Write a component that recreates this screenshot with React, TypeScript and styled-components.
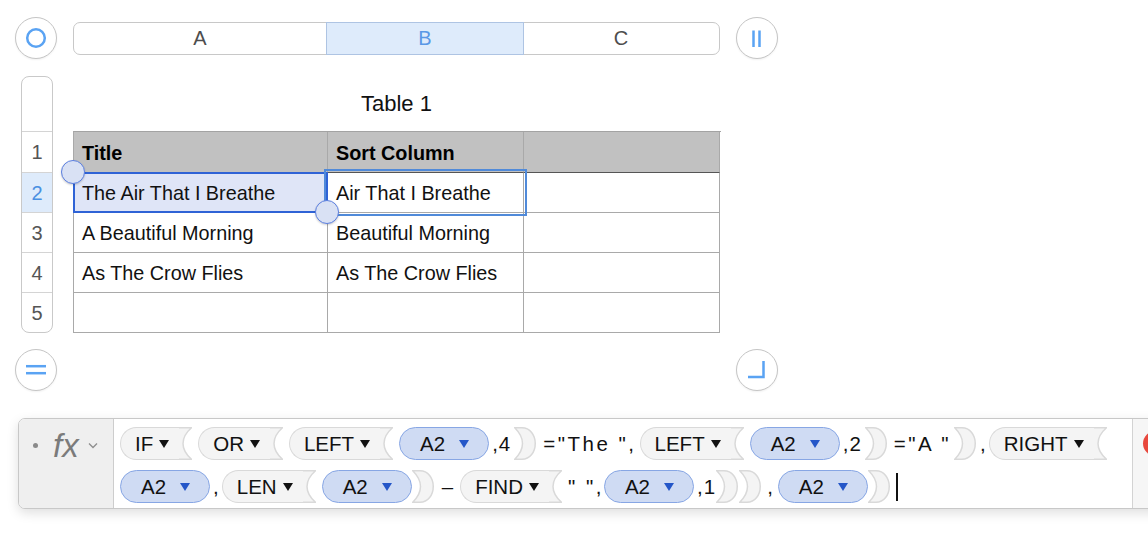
import React from "react";
import styled, { createGlobalStyle } from "styled-components";

const GlobalStyle = createGlobalStyle`
  html, body {
    margin: 0;
    padding: 0;
    overflow: hidden;
    background: #fff;
  }
  body {
    font-family: "Liberation Sans", Arial, sans-serif;
    color: #111;
  }
`;

const BLUE = "#5aa3f3";

const Page = styled.div`
  width: 1148px;
  height: 538px;
  box-sizing: border-box;
  padding: 17px 0 0 15px;
`;

const Sheet = styled.div`
  display: grid;
  grid-template-columns: 42px 647px 42px;
  grid-template-rows: 43px 257px 42px;
  column-gap: 16px;
  row-gap: 16px;
`;

const CircleButton = styled.div<{ $col: number; $row: number }>`
  grid-column: ${(p) => p.$col};
  grid-row: ${(p) => p.$row};
  align-self: start;
  width: 42px;
  height: 42px;
  box-sizing: border-box;
  border-radius: 50%;
  border: 1.5px solid #c5c5c5;
  background: #fff;
  box-shadow: 0 1px 2px rgba(0, 0, 0, 0.06);
  display: flex;
  align-items: center;
  justify-content: center;
`;

const ColumnBar = styled.div`
  grid-column: 2;
  grid-row: 1;
  align-self: center;
  display: grid;
  grid-template-columns: 253px 196px 196px;
  width: 647px;
  height: 33px;
  box-sizing: border-box;
  border: 1px solid #c8c8c8;
  border-radius: 7px;
  background: #fff;
`;

const ColumnLabel = styled.div<{ $active?: boolean; $sep?: boolean }>`
  position: relative;
  display: flex;
  align-items: center;
  justify-content: center;
  font-size: 20px;
  color: ${(p) => (p.$active ? "#5a98e6" : "#4d4d4d")};
  background: ${(p) => (p.$active ? "#deebfb" : "transparent")};
  border-right: ${(p) => (p.$sep ? "1px solid #c8c8c8" : "none")};
  box-shadow: ${(p) => (p.$active ? "0 0 0 1px #aec4e3" : "none")};
`;

const RowHeaders = styled.div`
  grid-column: 1;
  grid-row: 2;
  margin-left: 6px;
  width: 32px;
  box-sizing: border-box;
  border: 1px solid #c9c9c9;
  border-radius: 8px;
  overflow: hidden;
  display: flex;
  flex-direction: column;
  background: #fff;
`;

const RowHeaderTop = styled.div`
  height: 54px;
`;

const RowNumber = styled.div<{ $active?: boolean; $first?: boolean }>`
  height: ${(p) => (p.$first ? 41 : 40)}px;
  box-sizing: border-box;
  border-top: 1px solid #d4d4d4;
  padding-top: 1px;
  display: flex;
  align-items: center;
  justify-content: center;
  font-size: 20px;
  color: ${(p) => (p.$active ? "#4a90e2" : "#555")};
  background: ${(p) => (p.$active ? "#deebfb" : "transparent")};
`;

const TableArea = styled.div`
  grid-column: 2;
  grid-row: 2;
  display: flex;
  flex-direction: column;
`;

const TableTitle = styled.div`
  height: 55px;
  width: 647px;
  display: flex;
  align-items: center;
  justify-content: center;
  font-size: 22px;
  color: #111;
`;

const Table = styled.div`
  display: grid;
  grid-template-columns: 254px 196px 196px;
  width: 647px;
  border-left: 1px solid #a9a9a9;
  border-top: 1px solid #a3a3a3;
`;

const Cell = styled.div`
  height: 40px;
  box-sizing: border-box;
  border-right: 1px solid #a9a9a9;
  border-bottom: 1px solid #a9a9a9;
  padding: 2px 0 0 8px;
  display: flex;
  align-items: center;
  font-size: 19.8px;
  color: #111;
  white-space: nowrap;
`;

const HeaderCell = styled(Cell)`
  height: 41px;
  background: #c1c1c1;
  font-weight: bold;
  color: #000;
  border-bottom-color: #555;
`;

const SelectedCell = styled(Cell)`
  position: relative;
  background: #dfe5f7;
  &::after {
    content: "";
    position: absolute;
    top: -1px;
    left: -1px;
    right: -1px;
    bottom: -1px;
    border: 2px solid #2f63d6;
    pointer-events: none;
  }
`;

const ReferencedCell = styled(Cell)`
  position: relative;
  &::after {
    content: "";
    position: absolute;
    top: -4px;
    left: -4px;
    right: -4px;
    bottom: -4px;
    border: 2px solid #508ad9;
    z-index: 1;
    pointer-events: none;
  }
`;

const Handle = styled.span<{ $corner: "tl" | "br" }>`
  position: absolute;
  width: 24px;
  height: 24px;
  box-sizing: border-box;
  border-radius: 50%;
  background: #d9e1f4;
  border: 1.5px solid #5b7fe0;
  box-shadow: 0 1px 2px rgba(0, 0, 0, 0.18);
  z-index: 3;
  ${(p) => (p.$corner === "tl" ? "left: -13px; top: -13px;" : "right: -12px; bottom: -12px;")}
`;

const FormulaBar = styled.div`
  margin: 27px 0 0 3px;
  width: 1200px;
  height: 91px;
  box-sizing: border-box;
  display: flex;
  border: 1px solid #c8c8c8;
  border-radius: 7px;
  background: #fff;
  box-shadow: 0 4px 12px rgba(0, 0, 0, 0.13);
  overflow: hidden;
`;

const FxSection = styled.div`
  width: 95px;
  flex-shrink: 0;
  box-sizing: border-box;
  background: #efefef;
  border-right: 1px solid #cdcdcd;
`;

const FxRow = styled.div`
  display: flex;
  align-items: center;
  height: 52px;
  padding-left: 14px;
`;

const Dot = styled.span`
  width: 5px;
  height: 5px;
  border-radius: 50%;
  background: #8a8a8a;
  margin-right: 15px;
`;

const Fx = styled.span`
  font-style: italic;
  font-size: 33px;
  line-height: 1;
  color: #7b7b7b;
  margin-right: 9px;
`;

const FormulaBody = styled.div`
  width: 1018px;
  flex-shrink: 0;
  box-sizing: border-box;
  padding: 8px 0 0 6px;
  display: flex;
  flex-direction: column;
  gap: 10px;
  overflow: hidden;
`;

const FormulaLine = styled.div`
  display: flex;
  align-items: center;
  height: 33px;
  white-space: nowrap;
`;

const SideSection = styled.div`
  flex: 1;
  border-left: 1px solid #d3d3d3;
  background: #f6f6f6;
  padding: 12px 0 0 10px;
`;

const CancelDot = styled.span`
  display: block;
  width: 25px;
  height: 25px;
  border-radius: 50%;
  background: #e8483d;
`;

const FnWrap = styled.span`
  display: inline-flex;
  flex-shrink: 0;
  margin-right: 6px;
`;

const FnBody = styled.span`
  display: inline-flex;
  align-items: center;
  height: 33px;
  box-sizing: border-box;
  padding: 0 10px 0 14px;
  background: #f4f4f4;
  border: 1.5px solid #d9d9d9;
  border-right: none;
  border-radius: 16.5px 0 0 16.5px;
  font-size: 20.5px;
  color: #111;
`;

const RefPill = styled.span`
  display: inline-flex;
  align-items: center;
  flex-shrink: 0;
  height: 33px;
  box-sizing: border-box;
  padding: 0 19px 0 20px;
  background: #cfdbf3;
  border: 1.5px solid #87a6e4;
  border-radius: 17px;
  font-size: 20.5px;
  color: #111;
`;

const Tri = styled.svg<{ $gap: number }>`
  margin-left: ${(p) => p.$gap}px;
  flex-shrink: 0;
`;

const Txt = styled.span<{ $ml: number; $mr: number; $ls: number }>`
  flex-shrink: 0;
  font-size: 20.5px;
  color: #111;
  white-space: pre;
  margin: 0 ${(p) => p.$mr}px 0 ${(p) => p.$ml}px;
  letter-spacing: ${(p) => p.$ls}px;
`;

const Crescent = styled.svg`
  flex-shrink: 0;
  margin-right: 1px;
`;

const Caret = styled.span`
  width: 2px;
  height: 28px;
  background: #111;
  margin-left: 5px;
`;

type Tok =
  | { k: "fn"; t: string }
  | { k: "ref" }
  | { k: "txt"; t: string; ml?: number; mr?: number; ls?: number }
  | { k: "close" }
  | { k: "caret" };

const line1: Tok[] = [
  { k: "fn", t: "IF" },
  { k: "fn", t: "OR" },
  { k: "fn", t: "LEFT" },
  { k: "ref" },
  { k: "txt", t: ",4", ls: 1 },
  { k: "close" },
  { k: "txt", t: '="The ",', ml: 6, ls: 2.5 },
  { k: "fn", t: "LEFT" },
  { k: "ref" },
  { k: "txt", t: ",2", ls: 1 },
  { k: "close" },
  { k: "txt", t: '="A "', ml: 6, ls: 2.5 },
  { k: "close" },
  { k: "txt", t: "," },
  { k: "fn", t: "RIGHT" },
];

const line2: Tok[] = [
  { k: "ref" },
  { k: "txt", t: "," },
  { k: "fn", t: "LEN" },
  { k: "ref" },
  { k: "close" },
  { k: "txt", t: "–", ml: 7, mr: 7 },
  { k: "fn", t: "FIND" },
  { k: "txt", t: '" ",', ml: 0, mr: 0, ls: 2.5 },
  { k: "ref" },
  { k: "txt", t: ",1", mr: 0, ls: 1 },
  { k: "close" },
  { k: "close" },
  { k: "txt", t: ",", ml: 5, mr: 5 },
  { k: "ref" },
  { k: "close" },
  { k: "caret" },
];

const Triangle = ({ color, gap }: { color: string; gap: number }) => (
  <Tri $gap={gap} width="10" height="8" viewBox="0 0 10 8">
    <polygon points="0,0 10,0 5,8" fill={color} />
  </Tri>
);

const concave = "M0,0.75 H12.5 C6.5,6 4,11 4,16.5 C4,22 6.5,27 12.5,32.25 H0";
const crescent =
  "M0.75,0.75 H8 C16,0.75 21.25,8 21.25,16.5 C21.25,25 16,32.25 8,32.25 H0.75 C6,27 8.5,22 8.5,16.5 C8.5,11 6,6 0.75,0.75 Z";

const FnToken = ({ name }: { name: string }) => (
  <FnWrap>
    <FnBody>
      {name}
      <Triangle color="#111" gap={6} />
    </FnBody>
    <svg width="13" height="33" viewBox="0 0 13 33">
      <path d={concave + " Z"} fill="#f4f4f4" />
      <path d={concave} fill="none" stroke="#d9d9d9" strokeWidth="1.5" />
    </svg>
  </FnWrap>
);

const renderToken = (tok: Tok, i: number) => {
  switch (tok.k) {
    case "fn":
      return <FnToken key={i} name={tok.t} />;
    case "ref":
      return (
        <RefPill key={i}>
          A2
          <Triangle color="#2456c8" gap={14} />
        </RefPill>
      );
    case "txt":
      return (
        <Txt key={i} $ml={tok.ml ?? 3} $mr={tok.mr ?? 3} $ls={tok.ls ?? 0}>
          {tok.t}
        </Txt>
      );
    case "close":
      return (
        <Crescent key={i} width="22" height="33" viewBox="0 0 22 33">
          <path d={crescent} fill="#f4f4f4" stroke="#d9d9d9" strokeWidth="1.5" />
        </Crescent>
      );
    case "caret":
      return <Caret key={i} />;
  }
};

const rows = [
  ["The Air That I Breathe", "Air That I Breathe", ""],
  ["A Beautiful Morning", "Beautiful Morning", ""],
  ["As The Crow Flies", "As The Crow Flies", ""],
  ["", "", ""],
];

export default function App() {
  return (
    <>
      <GlobalStyle />
      <Page>
        <Sheet>
          <CircleButton $col={1} $row={1}>
            <svg width="24" height="24" viewBox="0 0 24 24">
              <circle cx="12" cy="12" r="8.8" fill="none" stroke={BLUE} strokeWidth="2.5" />
            </svg>
          </CircleButton>

          <ColumnBar>
            <ColumnLabel $sep>A</ColumnLabel>
            <ColumnLabel $active>B</ColumnLabel>
            <ColumnLabel>C</ColumnLabel>
          </ColumnBar>

          <CircleButton $col={3} $row={1}>
            <svg width="24" height="24" viewBox="0 0 24 24">
              <line x1="8.5" y1="4.5" x2="8.5" y2="21" stroke={BLUE} strokeWidth="2.5" />
              <line x1="14.5" y1="4.5" x2="14.5" y2="21" stroke={BLUE} strokeWidth="2.5" />
            </svg>
          </CircleButton>

          <RowHeaders>
            <RowHeaderTop />
            {[1, 2, 3, 4, 5].map((n) => (
              <RowNumber key={n} $first={n === 1} $active={n === 2}>
                {n}
              </RowNumber>
            ))}
          </RowHeaders>

          <TableArea>
            <TableTitle>Table 1</TableTitle>
            <Table>
              <HeaderCell>Title</HeaderCell>
              <HeaderCell>Sort Column</HeaderCell>
              <HeaderCell />
              {rows.map((r, ri) =>
                r.map((v, ci) => {
                  if (ri === 0 && ci === 0)
                    return (
                      <SelectedCell key={`${ri}-${ci}`}>
                        {v}
                        <Handle $corner="tl" />
                        <Handle $corner="br" />
                      </SelectedCell>
                    );
                  if (ri === 0 && ci === 1)
                    return <ReferencedCell key={`${ri}-${ci}`}>{v}</ReferencedCell>;
                  return <Cell key={`${ri}-${ci}`}>{v}</Cell>;
                })
              )}
            </Table>
          </TableArea>

          <CircleButton $col={1} $row={3}>
            <svg width="24" height="24" viewBox="0 0 24 24">
              <line x1="2" y1="8.2" x2="22" y2="8.2" stroke={BLUE} strokeWidth="2.5" />
              <line x1="2" y1="15.2" x2="22" y2="15.2" stroke={BLUE} strokeWidth="2.5" />
            </svg>
          </CircleButton>

          <CircleButton $col={3} $row={3}>
            <svg width="24" height="24" viewBox="0 0 24 24">
              <polyline points="18.5,3 18.5,19 3,19" fill="none" stroke={BLUE} strokeWidth="2.5" />
            </svg>
          </CircleButton>
        </Sheet>

        <FormulaBar>
          <FxSection>
            <FxRow>
              <Dot />
              <Fx>fx</Fx>
              <svg width="10" height="7" viewBox="0 0 10 7">
                <polyline points="1,1.5 5,5.5 9,1.5" fill="none" stroke="#8e8e8e" strokeWidth="1.3" />
              </svg>
            </FxRow>
          </FxSection>
          <FormulaBody>
            <FormulaLine>{line1.map(renderToken)}</FormulaLine>
            <FormulaLine>{line2.map(renderToken)}</FormulaLine>
          </FormulaBody>
          <SideSection>
            <CancelDot />
          </SideSection>
        </FormulaBar>
      </Page>
    </>
  );
}
